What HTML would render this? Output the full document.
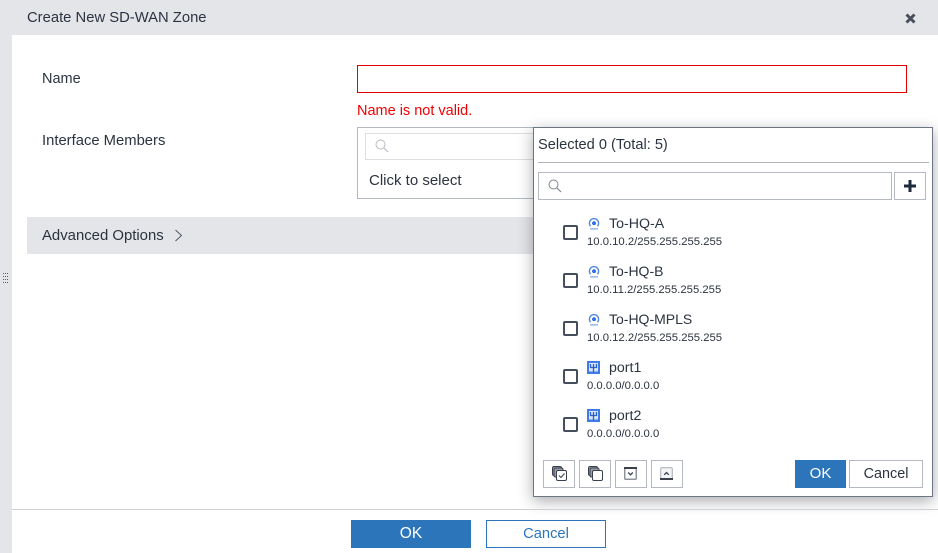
<!DOCTYPE html>
<html><head><meta charset="utf-8"><style>
html,body{margin:0;padding:0;width:938px;height:553px;overflow:hidden;background:#fff}
body{position:relative;font-family:"Liberation Sans",sans-serif;color:#2c3340}
div,svg{position:absolute;box-sizing:border-box}
.t{white-space:nowrap;font-size:14px;line-height:18px}
.s{font-size:11.3px;line-height:12px;color:#2c3340;white-space:nowrap}
.b{border:1px solid #b4b9c1;background:#fff}
.c{width:15px;height:15px;border:2px solid #474f5c;border-radius:2px;left:563px;background:#fff}
</style></head><body>
<div style="left:0;top:0;width:938px;height:35px;background:#e4e5e9"></div>
<div style="left:0;top:35px;width:12px;height:518px;background:#e4e5e9"></div>
<svg style="left:3px;top:272px" width="6" height="13"><g fill="#555b66"><rect x="0" y="1" width="1" height="1"/><rect x="0" y="4" width="1" height="1"/><rect x="0" y="7" width="1" height="1"/><rect x="0" y="10" width="1" height="1"/><rect x="2" y="1" width="1" height="1"/><rect x="2" y="4" width="1" height="1"/><rect x="2" y="7" width="1" height="1"/><rect x="2" y="10" width="1" height="1"/><rect x="4" y="1" width="1" height="1"/><rect x="4" y="4" width="1" height="1"/><rect x="4" y="7" width="1" height="1"/><rect x="4" y="10" width="1" height="1"/></g></svg>
<div class="t" style="left:27px;top:9px;font-size:14.8px">Create New SD-WAN Zone</div>
<svg style="left:904px;top:12px" width="14" height="14"><path d="M2.5 2.5L10.5 10.5M10.5 2.5L2.5 10.5" stroke="#474f5c" stroke-width="3"/></svg>
<div class="t" style="left:42px;top:70px;font-size:14.5px">Name</div>
<div class="t" style="left:42px;top:132px;font-size:14.8px">Interface Members</div>
<div style="left:357px;top:65px;width:550px;height:28px;border:1px solid #e00000;background:#fff"></div>
<div class="t" style="left:357px;top:102px;color:#f00000;font-size:14.5px">Name is not valid.</div>
<div class="b" style="left:357px;top:127px;width:200px;height:72px"></div>
<div style="left:365px;top:133px;width:190px;height:27px;border:1px solid #dcdee2"></div>
<svg style="left:374px;top:138px" width="16" height="16"><circle cx="6.5" cy="6.5" r="4.5" fill="none" stroke="#b8bcc3" stroke-width="1"/><path d="M10 10L14 14" stroke="#b8bcc3" stroke-width="1.2"/></svg>
<div class="t" style="left:369px;top:172px;font-size:15px">Click to select</div>
<div style="left:27px;top:217px;width:900px;height:37px;background:#e4e5e9"></div>
<div class="t" style="left:42px;top:227px;font-size:14.9px">Advanced Options</div>
<svg style="left:173px;top:228px" width="12" height="15"><path d="M2.5 2L8.5 7.5L2.5 13" fill="none" stroke="#474f5c" stroke-width="0.9"/></svg>

<div style="left:533px;top:127px;width:400px;height:370px;background:#fff;border:1px solid #6d7582;box-shadow:0 4px 14px rgba(40,45,55,.4)"></div>
<div class="t" style="left:538px;top:136px;font-size:14.6px">Selected 0 (Total: 5)</div>
<div style="left:538px;top:162px;width:391px;height:1px;background:#b0b5bd"></div>
<div class="b" style="left:538px;top:172px;width:354px;height:28px"></div>
<svg style="left:547px;top:178px" width="16" height="16"><circle cx="6.5" cy="6.5" r="4.5" fill="none" stroke="#7d838d" stroke-width="1"/><path d="M10 10L14 14" stroke="#7d838d" stroke-width="1.2"/></svg>
<div class="b" style="left:894px;top:172px;width:32px;height:28px"></div>
<svg style="left:903px;top:179px" width="14" height="14"><path d="M7 1V13M1 7H13" stroke="#1f2a3c" stroke-width="3"/></svg>

<div class="c" style="top:225px"></div>
<svg style="left:588px;top:218px" width="12" height="12"><path d="M2.6 8.3A4.6 4.6 0 1 1 9.4 8.3" fill="none" stroke="#4d86e8" stroke-width="1.4"/><circle cx="6" cy="5.2" r="1.9" fill="#2c6be0"/><path d="M2 10.8H10" stroke="#9dbcf0" stroke-width="1.6"/></svg>
<div class="t" style="left:609px;top:215px;font-size:14.2px">To-HQ-A</div>
<div class="s" style="left:587px;top:236px">10.0.10.2/255.255.255.255</div>

<div class="c" style="top:273px"></div>
<svg style="left:588px;top:266px" width="12" height="12"><path d="M2.6 8.3A4.6 4.6 0 1 1 9.4 8.3" fill="none" stroke="#4d86e8" stroke-width="1.4"/><circle cx="6" cy="5.2" r="1.9" fill="#2c6be0"/><path d="M2 10.8H10" stroke="#9dbcf0" stroke-width="1.6"/></svg>
<div class="t" style="left:609px;top:262px">To-HQ-B</div>
<div class="s" style="left:587px;top:284px">10.0.11.2/255.255.255.255</div>

<div class="c" style="top:321px"></div>
<svg style="left:588px;top:314px" width="12" height="12"><path d="M2.6 8.3A4.6 4.6 0 1 1 9.4 8.3" fill="none" stroke="#4d86e8" stroke-width="1.4"/><circle cx="6" cy="5.2" r="1.9" fill="#2c6be0"/><path d="M2 10.8H10" stroke="#9dbcf0" stroke-width="1.6"/></svg>
<div class="t" style="left:609px;top:310px">To-HQ-MPLS</div>
<div class="s" style="left:587px;top:332px">10.0.12.2/255.255.255.255</div>

<div class="c" style="top:369px"></div>
<svg style="left:587px;top:361px" width="13" height="13"><rect width="13" height="13" fill="#3f7be6"/><rect x="2" y="2" width="9" height="8.5" fill="#d9e5fb"/><path d="M3.5 3V6.5H9.5V3M6.5 3V11" fill="none" stroke="#2c5fc4" stroke-width="1.3"/></svg>
<div class="t" style="left:609px;top:359px;font-size:14.2px">port1</div>
<div class="s" style="left:587px;top:380px">0.0.0.0/0.0.0.0</div>

<div class="c" style="top:417px"></div>
<svg style="left:587px;top:409px" width="13" height="13"><rect width="13" height="13" fill="#3f7be6"/><rect x="2" y="2" width="9" height="8.5" fill="#d9e5fb"/><path d="M3.5 3V6.5H9.5V3M6.5 3V11" fill="none" stroke="#2c5fc4" stroke-width="1.3"/></svg>
<div class="t" style="left:609px;top:407px;font-size:14.2px">port2</div>
<div class="s" style="left:587px;top:428px">0.0.0.0/0.0.0.0</div>

<div class="b" style="left:543px;top:460px;width:32px;height:28px"></div>
<svg style="left:551px;top:465px" width="17" height="17"><rect x="1.5" y="1.5" width="9" height="9" rx="1.5" fill="#9a9ea6" stroke="#3a414d"/><rect x="3" y="3" width="9" height="9" rx="1.5" fill="#9a9ea6" stroke="#3a414d"/><rect x="5.5" y="5.5" width="10" height="10" rx="1.5" fill="#fff" stroke="#3a414d"/><path d="M8 10.5L10 12.5L13.5 8.5" fill="none" stroke="#3a414d"/></svg>
<div class="b" style="left:579px;top:460px;width:32px;height:28px"></div>
<svg style="left:587px;top:465px" width="17" height="17"><rect x="1.5" y="1.5" width="9" height="9" rx="1.5" fill="#9a9ea6" stroke="#3a414d"/><rect x="3" y="3" width="9" height="9" rx="1.5" fill="#9a9ea6" stroke="#3a414d"/><rect x="5.5" y="5.5" width="10" height="10" rx="1.5" fill="#fff" stroke="#3a414d"/></svg>
<div class="b" style="left:615px;top:460px;width:32px;height:28px"></div>
<svg style="left:624px;top:467px" width="14" height="14"><rect x="0.75" y="0.75" width="11.5" height="11.5" rx="1" fill="#fff" stroke="#8f949c" stroke-width="1.5"/><rect x="0" y="0" width="13" height="2" fill="#3a414d"/><path d="M4.2 5.5L6.5 7.8L8.8 5.5" fill="none" stroke="#3a414d" stroke-width="1.3"/></svg>
<div class="b" style="left:651px;top:460px;width:32px;height:28px"></div>
<svg style="left:660px;top:467px" width="14" height="14"><rect x="0.75" y="0.75" width="11.5" height="11.5" rx="1" fill="#f4f5f6" stroke="#a6aab1" stroke-width="1"/><rect x="0" y="11" width="13" height="2" fill="#3a414d"/><path d="M4.2 7.8L6.5 5.5L8.8 7.8" fill="none" stroke="#3a414d" stroke-width="1.3"/></svg>
<div class="t" style="left:795px;top:460px;width:51px;height:28px;line-height:27px;text-align:center;background:#2c75ba;color:#fff;font-size:15px">OK</div>
<div class="t b" style="left:849px;top:460px;width:74px;height:28px;line-height:27px;text-align:center;font-size:14.4px">Cancel</div>

<div style="left:12px;top:509px;width:926px;height:1px;background:#cfd0d3"></div>
<div class="t" style="left:351px;top:520px;width:120px;height:28px;line-height:27px;text-align:center;background:#2c75ba;color:#fff;font-size:15.5px">OK</div>
<div class="t" style="left:486px;top:520px;width:120px;height:28px;line-height:27px;text-align:center;border:1px solid #2c75ba;color:#2c75ba;font-size:14.7px">Cancel</div>
</body></html>
